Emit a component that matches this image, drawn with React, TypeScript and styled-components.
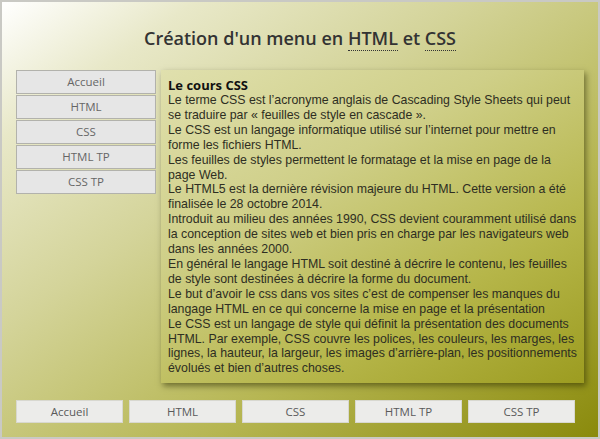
import React from "react";
import styled, { createGlobalStyle } from "styled-components";

const GlobalStyle = createGlobalStyle`
  * { box-sizing: border-box; }
  body {
    margin: 0;
    font-family: "Open Sans", "Liberation Sans", sans-serif;
  }
`;

const menu = ["Accueil", "HTML", "CSS", "HTML TP", "CSS TP"];

// each paragraph is kept with the line breaks of the original layout
const paragraphs: string[][] = [
  [
    "Le terme CSS est l’acronyme anglais de Cascading Style Sheets qui peut",
    "se traduire par « feuilles de style en cascade ».",
  ],
  [
    "Le CSS est un langage informatique utilisé sur l’internet pour mettre en",
    "forme les fichiers HTML.",
  ],
  [
    "Les feuilles de styles permettent le formatage et la mise en page de la",
    "page Web.",
  ],
  [
    "Le HTML5 est la dernière révision majeure du HTML. Cette version a été",
    "finalisée le 28 octobre 2014.",
  ],
  [
    "Introduit au milieu des années 1990, CSS devient couramment utilisé dans",
    "la conception de sites web et bien pris en charge par les navigateurs web",
    "dans les années 2000.",
  ],
  [
    "En général le langage HTML soit destiné à décrire le contenu, les feuilles",
    "de style sont destinées à décrire la forme du document.",
  ],
  [
    "Le but d’avoir le css dans vos sites c’est de compenser les manques du",
    "langage HTML en ce qui concerne la mise en page et la présentation",
  ],
  [
    "Le CSS est un langage de style qui définit la présentation des documents",
    "HTML. Par exemple, CSS couvre les polices, les couleurs, les marges, les",
    "lignes, la hauteur, la largeur, les images d’arrière-plan, les positionnements",
    "évolués et bien d’autres choses.",
  ],
];

const App = () => {
  return (
    <Page>
      <GlobalStyle />
      <Title>
        Création d'un menu en <Abbr title="HyperText Markup Language">HTML</Abbr> et{" "}
        <Abbr title="Cascading Style Sheets">CSS</Abbr>
      </Title>
      <Main>
        <SideNav>
          {menu.map((item) => (
            <SideItem key={item} href="#">
              {item}
            </SideItem>
          ))}
        </SideNav>
        <Article>
          <ArticleTitle>Le cours CSS</ArticleTitle>
          {paragraphs.map((lines, i) => (
            <Paragraph key={i}>
              {lines.map((line, j) => (
                <React.Fragment key={j}>
                  {j > 0 && <br />}
                  {line}
                </React.Fragment>
              ))}
            </Paragraph>
          ))}
        </Article>
      </Main>
      <FooterNav>
        {menu.map((item) => (
          <FooterItem key={item} href="#">
            {item}
          </FooterItem>
        ))}
      </FooterNav>
    </Page>
  );
};

const Page = styled.div`
  width: 600px;
  height: 439px;
  border: 2px solid #c9c9c4;
  background: linear-gradient(
    145deg,
    #ffffff 0%,
    #e8e8c8 16%,
    #d4d49a 38%,
    #b6b652 68%,
    #8a8a0c 100%
  );
  display: flex;
  flex-direction: column;
  overflow: hidden;
`;

const Title = styled.h1`
  margin: 0;
  padding-top: 25px;
  height: 68px;
  text-align: center;
  font-family: "Open Sans", sans-serif;
  font-size: 18px;
  line-height: 22px;
  font-weight: 600;
  color: #333333;
`;

const Abbr = styled.abbr`
  text-decoration: none;
  border-bottom: 1px dotted #333;
`;

const Main = styled.div`
  display: flex;
  align-items: flex-start;
  padding-left: 14px;
  gap: 5px;
`;

const SideNav = styled.nav`
  width: 140px;
  display: flex;
  flex-direction: column;
  gap: 1px;
`;

const SideItem = styled.a`
  display: block;
  height: 24px;
  line-height: 22px;
  border: 1px solid #b2b2ac;
  background: #e6e6e6;
  color: #666666;
  text-align: center;
  text-decoration: none;
  font-family: "Open Sans", sans-serif;
  font-size: 11.5px;
`;

const Article = styled.article`
  width: 423px;
  height: 313px;
  padding: 8px 6px 0 7px;
  background: linear-gradient(
    150deg,
    #e0e0ae 0%,
    #cfcf88 35%,
    #b6b64a 70%,
    #9c9c20 100%
  );
  box-shadow: 2px 3px 6px rgba(40, 40, 0, 0.55);
  color: #2e2e22;
  font-family: "Liberation Sans", Arial, sans-serif;
  font-size: 12.35px;
  line-height: 14.9px;
  white-space: nowrap;
`;

const ArticleTitle = styled.h2`
  margin: 0;
  font-family: "Open Sans", sans-serif;
  font-size: 13px;
  font-weight: bold;
  line-height: 15px;
  color: #111;
`;

const Paragraph = styled.p`
  margin: 0;
`;

const FooterNav = styled.nav`
  margin-top: auto;
  margin-bottom: 14px;
  padding-left: 14px;
  display: flex;
  gap: 6px;
`;

const FooterItem = styled.a`
  display: block;
  width: 107px;
  height: 23px;
  line-height: 21px;
  border: 1px solid #d8d8d0;
  background: #ececea;
  color: #5a5a5a;
  text-align: center;
  text-decoration: none;
  font-family: "Open Sans", sans-serif;
  font-size: 11.5px;
`;

export default App;
